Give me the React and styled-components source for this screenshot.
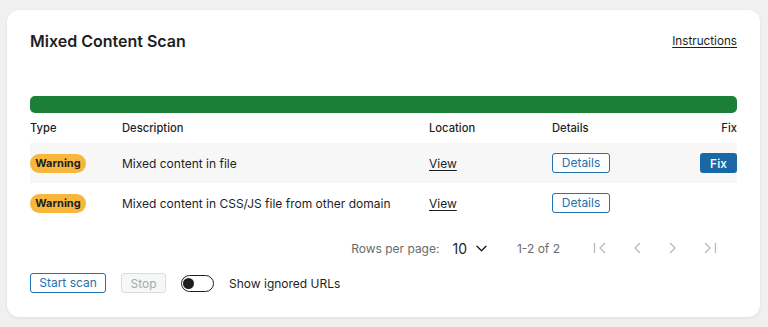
import React from "react";
import styled, { createGlobalStyle } from "styled-components";

const GlobalStyle = createGlobalStyle`
  html, body { margin: 0; padding: 0; background: #f0f0f0; }
  body { font-family: Inter, "Noto Sans", Arial, sans-serif; color: #1e1e1e; -webkit-font-smoothing: antialiased; }
  * { box-sizing: border-box; }
`;

const Page = styled.div`
  padding: 10px 8px 10px 7px;
`;

const Card = styled.section`
  background: #fff;
  border-radius: 12px;
  box-shadow: 0 1px 3px rgba(0, 0, 0, 0.08);
  padding: 20px 23px 24px 23px;
  height: 307px;
`;

const Header = styled.header`
  display: flex;
  align-items: center;
  justify-content: space-between;
  height: 22px;
`;

const Title = styled.h1`
  margin: 0;
  font-size: 16px;
  font-weight: 600;
  color: #1e1e1e;
`;

const Link = styled.a`
  font-size: 11.7px;
  color: #1e1e1e;
  text-decoration: underline;
  text-underline-offset: 2px;
`;

const Progress = styled.div`
  margin-top: 44px;
  height: 17px;
  border-radius: 5px;
  background: #1c7f36;
`;

const Table = styled.div`
  display: grid;
  grid-template-columns: 92px 307px 123px 1fr auto;
`;

const HeadCell = styled.div`
  height: 30px;
  display: flex;
  align-items: center;
  font-size: 11.2px;
  font-weight: 500;
  color: #1e1e1e;
  justify-content: ${(p) => (p.$right ? "flex-end" : "flex-start")};
`;

const Cell = styled.div`
  height: 40px;
  display: flex;
  align-items: center;
  font-size: 12px;
  color: #1e1e1e;
  background: ${(p) => (p.$shade ? "#f7f7f7" : "#fff")};
  justify-content: ${(p) => (p.$right ? "flex-end" : "flex-start")};
`;

const Badge = styled.span`
  display: inline-flex;
  align-items: center;
  justify-content: center;
  width: 56px;
  height: 19px;
  border-radius: 10px;
  background: #f8b63c;
  font-size: 11px;
  font-weight: 700;
  color: #1e1e1e;
`;

const ViewLink = styled.a`
  font-size: 12px;
  color: #1e1e1e;
  text-decoration: underline;
  text-underline-offset: 2px;
`;

const OutlineButton = styled.button`
  height: 20px;
  width: ${(p) => p.$w}px;
  padding: 0;
  border: 1px solid #2271b1;
  border-radius: 3px;
  background: #fff;
  color: #2271b1;
  font-family: inherit;
  font-size: 12px;
  line-height: 18px;
`;

const FixButton = styled.button`
  height: 20px;
  width: 37px;
  padding: 0;
  border: none;
  border-radius: 3px;
  background: #1a67a5;
  color: #fff;
  font-family: inherit;
  font-size: 12px;
  font-weight: 500;
`;

const Pagination = styled.div`
  height: 50px;
  display: flex;
  align-items: center;
  justify-content: flex-end;
  padding-right: 9px;
  font-size: 12px;
  color: #666;
`;

const RowsLabel = styled.span`
  color: #6b6b6b;
`;

const Select = styled.span`
  display: inline-flex;
  align-items: center;
  margin-left: 13px;
  color: #1e1e1e;
  font-size: 14px;
  gap: 9px;
`;

const Range = styled.span`
  margin-left: 30px;
  margin-right: 22px;
  color: #6b6b6b;
`;

const PageButton = styled.button`
  width: 36.5px;
  height: 24px;
  padding: 0;
  border: none;
  background: none;
  display: flex;
  align-items: center;
  justify-content: center;
  color: #b9b9b9;
`;

const Controls = styled.div`
  display: flex;
  align-items: center;
  gap: 15px;
`;

const DisabledButton = styled.button`
  height: 20px;
  width: 45px;
  padding: 0;
  border: 1px solid #dcdcde;
  border-radius: 3px;
  background: #f6f7f7;
  color: #a7aaad;
  font-family: inherit;
  font-size: 12px;
`;

const Toggle = styled.span`
  width: 33px;
  height: 17px;
  border: 1.5px solid #1e1e1e;
  border-radius: 9px;
  background: #fff;
  display: inline-flex;
  align-items: center;
  padding-left: 1px;
`;

const Knob = styled.span`
  width: 11px;
  height: 11px;
  border-radius: 50%;
  background: #1e1e1e;
`;

const ToggleLabel = styled.span`
  font-size: 12px;
  color: #1e1e1e;
`;

const Chevron = ({ dir = "left", bar = false }) => {
  const left = dir === "left";
  return (
    <svg width="14" height="12" viewBox="0 0 14 12" fill="none" stroke="currentColor" strokeWidth="1.3" strokeLinecap="round" strokeLinejoin="round">
      {left ? (
        <>
          {bar && <path d="M1.5 1.5v9" />}
          <path d={bar ? "M11.5 1.5L7 6l4.5 4.5" : "M9.5 1.5L5 6l4.5 4.5"} />
        </>
      ) : (
        <>
          <path d={bar ? "M2.5 1.5L7 6l-4.5 4.5" : "M4.5 1.5L9 6l-4.5 4.5"} />
          {bar && <path d="M12.5 1.5v9" />}
        </>
      )}
    </svg>
  );
};

const rows = [
  { desc: "Mixed content in file", fix: true },
  { desc: "Mixed content in CSS/JS file from other domain", fix: false },
];

export default function App() {
  return (
    <>
      <GlobalStyle />
      <Page>
        <Card>
          <Header>
            <Title>Mixed Content Scan</Title>
            <Link href="#">Instructions</Link>
          </Header>
          <Progress />
          <Table>
            <HeadCell>Type</HeadCell>
            <HeadCell>Description</HeadCell>
            <HeadCell>Location</HeadCell>
            <HeadCell>Details</HeadCell>
            <HeadCell $right>Fix</HeadCell>
            {rows.map((r, i) => {
              const shade = i % 2 === 0;
              return (
                <React.Fragment key={i}>
                  <Cell $shade={shade}><Badge>Warning</Badge></Cell>
                  <Cell $shade={shade}>{r.desc}</Cell>
                  <Cell $shade={shade}><ViewLink href="#">View</ViewLink></Cell>
                  <Cell $shade={shade}><OutlineButton $w={58}>Details</OutlineButton></Cell>
                  <Cell $shade={shade} $right>{r.fix && <FixButton>Fix</FixButton>}</Cell>
                </React.Fragment>
              );
            })}
          </Table>
          <Pagination>
            <RowsLabel>Rows per page:</RowsLabel>
            <Select>
              10
              <svg width="11" height="7" viewBox="0 0 11 7" fill="none" stroke="#1e1e1e" strokeWidth="1.4" strokeLinecap="round" strokeLinejoin="round">
                <path d="M1 1.2l4.5 4.5L10 1.2" />
              </svg>
            </Select>
            <Range>1-2 of 2</Range>
            <PageButton aria-label="First page"><Chevron dir="left" bar /></PageButton>
            <PageButton aria-label="Previous page"><Chevron dir="left" /></PageButton>
            <PageButton aria-label="Next page"><Chevron dir="right" /></PageButton>
            <PageButton aria-label="Last page"><Chevron dir="right" bar /></PageButton>
          </Pagination>
          <Controls>
            <OutlineButton $w={76}>Start scan</OutlineButton>
            <DisabledButton disabled>Stop</DisabledButton>
            <Toggle><Knob /></Toggle>
            <ToggleLabel>Show ignored URLs</ToggleLabel>
          </Controls>
        </Card>
      </Page>
    </>
  );
}
